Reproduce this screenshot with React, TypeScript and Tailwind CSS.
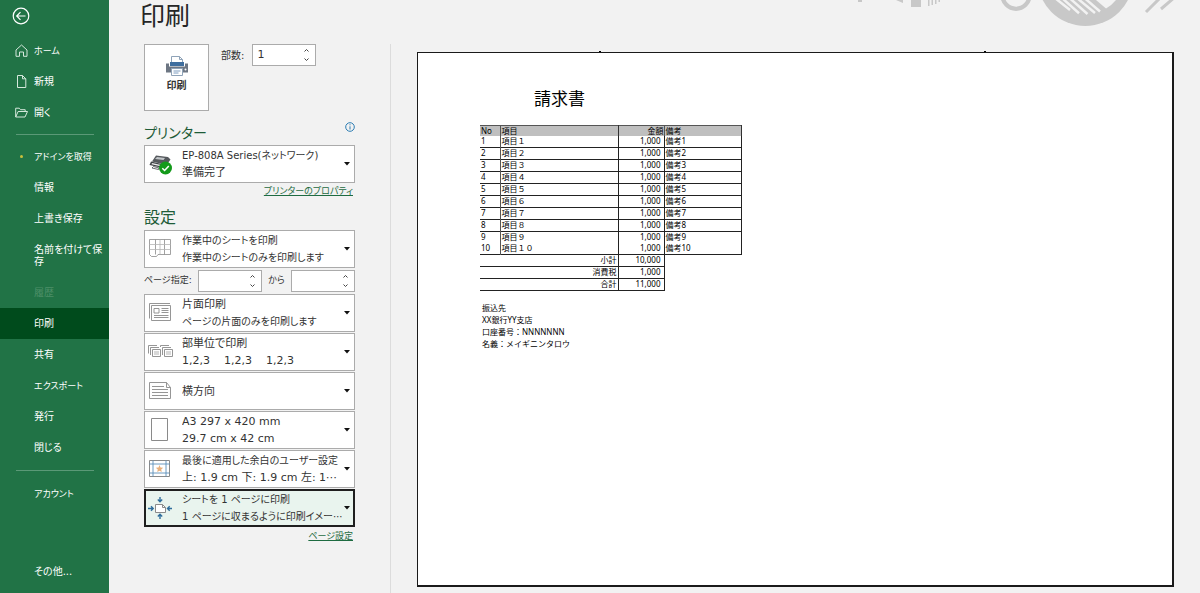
import React from "react";

const ink = "#8a8a8a";

const hasKatakana = (text: string) => /[ァ-ヶ]/.test(text);

function BackIcon() {
  return (
    <svg width="18" height="18" viewBox="0 0 18 18" fill="none" stroke="#fff" strokeWidth="1.2">
      <circle cx="9" cy="9" r="7.8" />
      <path d="M13.5 9H5M8.5 5.2L4.7 9l3.8 3.8" />
    </svg>
  );
}

function HomeIcon() {
  return (
    <svg width="13" height="13" viewBox="0 0 13 13" fill="none" stroke="#d5e8dc" strokeWidth="1">
      <path d="M1 6L6.5 1 12 6v6.3H8.5V8h-4v4.3H1z" />
    </svg>
  );
}

function NewIcon() {
  return (
    <svg width="13" height="13" viewBox="0 0 13 13" fill="none" stroke="#d5e8dc" strokeWidth="1">
      <path d="M2.5.5h5l3.3 3.3v8.7H2.5zM7.5.5v3.3h3.3" />
    </svg>
  );
}

function OpenIcon() {
  return (
    <svg width="13" height="13" viewBox="0 0 13 13" fill="none" stroke="#d5e8dc" strokeWidth="1">
      <path d="M.7 11V2.2h3.6l1.2 1.5h4.7v1.8M.7 11l2.4-5.5h9.4L10 11z" />
    </svg>
  );
}

function PrinterIcon() {
  return (
    <svg width="24" height="22" viewBox="0 0 24 22">
      <path d="M6.500 9V1.500h8l3 3V9" fill="#fff" stroke="#8fa3b8" />
      <path d="M14.500 1.500v3h3" fill="none" stroke="#8fa3b8" />
      <path d="M1 8.500h3v3h16v-3h3v9H1z" fill="#6d7683" />
      <path d="M5 7h14v4H5z" fill="#3f6e9e" />
      <path d="M6.500 13.500h11v7h-11z" fill="#fff" stroke="#8fa3b8" />
      <path d="M8.500 16h7M8.500 18h5" stroke="#7d9cc0" />
      <circle cx="20.500" cy="14.500" r="1" fill="#fff" />
    </svg>
  );
}

function ReadyPrinterIcon() {
  return (
    <svg width="26" height="24" viewBox="0 0 26 24">
      <path d="M8 3.500l12 1.500 2.500 2.500-4 5.500L4 9.500z" fill="#55595d" />
      <path d="M9 5l8 1-1.500 2-8.500-1z" fill="#c3c7ca" />
      <path d="M3 9.500l13 3-1 3.500-13.500-3z" fill="#3f4347" />
      <path d="M4 11l9 2-.5 1.200-9-2z" fill="#eee" />
      <path d="M5.500 14.500L11 16l-.5 1.500-6.500-1.500z" fill="#fff" stroke="#44484c" strokeWidth=".8" />
      <circle cx="17.500" cy="16" r="6.500" fill="#149a1b" />
      <path d="M14.300 16.200l2.300 2.300 4.200-4.600" fill="none" stroke="#fff" strokeWidth="1.500" />
    </svg>
  );
}

function SheetIcon() {
  return (
    <svg width="26" height="22" viewBox="0 0 26 22" fill="none" stroke={ink} strokeWidth=".8">
      <path d="M1.500 1.500h21v15H10l-1.500 2h-5l-2-2zM7.500 1.500v15M16.500 1.500v15" />
      <path d="M1.500 6.500h21M1.500 11.500h21" stroke="#b5b5b5" />
      <path d="M12 1.500v15" stroke="#b5b5b5" />
    </svg>
  );
}

function OneSideIcon() {
  return (
    <svg width="26" height="22" viewBox="0 0 26 22" fill="none" stroke={ink} strokeWidth=".9">
      <path d="M3.500 3.500h19v15h-19zM22 1.500H1.500v15M6 6.500h5v4.500H6zM13.500 6.500h7M13.500 8.500h7M13.500 10.500h7M6 13.500h14.500M6 15.500h14.500" />
    </svg>
  );
}

function CollateIcon() {
  return (
    <svg width="26" height="16" viewBox="0 0 26 16" fill="none" stroke={ink} strokeWidth=".9">
      <path d="M4.500 5.500h8v7h-8zM2.500 11V3.500H11M.5 9.500v-8h8.500" />
      <path d="M16.500 5.500h8v7h-8zM14.500 11V3.500H23M12.500 3v-1.500H21" />
      <path d="M6 8h5M6 10h5M18 8h5M18 10h5" stroke="#aaa" />
    </svg>
  );
}

function LandscapeIcon() {
  return (
    <svg width="26" height="22" viewBox="0 0 26 22" fill="none" stroke={ink} strokeWidth=".9">
      <path d="M1.500 2.500h17l4 5v11h-21zM18.500 2.500v5h4M4 6.500h12M4 9.500h16M4 12.500h16M4 15.500h16" />
    </svg>
  );
}

function PaperIcon() {
  return (
    <svg width="26" height="26" viewBox="0 0 26 26" fill="none" stroke={ink}>
      <path d="M3.500 1.500h16v22h-16z" />
    </svg>
  );
}

function MarginIcon() {
  return (
    <svg width="26" height="22" viewBox="0 0 26 22" fill="none">
      <path d="M1.500 2.500h20v16h-20z" stroke={ink} />
      <path d="M1.500 6h20M1.500 15h20M5 2.500v16M18 2.500v16" stroke="#5b8fb9" strokeWidth=".9" />
      <path d="M11.500 7l1 2.500 2.700.2-2 1.800.6 2.600-2.300-1.400-2.300 1.400.6-2.600-2-1.800 2.700-.2z" fill="#e8b07c" />
    </svg>
  );
}

function FitIcon() {
  return (
    <svg width="26" height="24" viewBox="0 0 26 24" fill="none">
      <path d="M7.500 8.500h7l3 3v5h-10z" fill="#fff" stroke={ink} />
      <path d="M14.500 8.500v3h3" stroke={ink} />
      <path
        d="M12 1v4.500M9.800 3.600l2.200 2.200 2.200-2.200M12 23v-4.500M9.800 20.500l2.200-2.200 2.200 2.200M0 12.500h5M3 10.300l2.200 2.200L3 14.700M24 12.500h-4.500M21.700 10.300l-2.200 2.200 2.200 2.200"
        stroke="#2f6d9c"
        strokeWidth="1.400"
      />
    </svg>
  );
}

function Chevrons() {
  return (
    <span className="flex w-3 flex-col justify-between py-[3px]">
      <button type="button" aria-label="増やす">
        <svg width="7" height="5" viewBox="0 0 7 5" fill="none" stroke="#444">
          <path d="M1.500 3.500l2-2 2 2" />
        </svg>
      </button>
      <button type="button" aria-label="減らす">
        <svg width="7" height="5" viewBox="0 0 7 5" fill="none" stroke="#444">
          <path d="M1.500 1.500l2 2 2-2" />
        </svg>
      </button>
    </span>
  );
}

type SpinnerProps = { id: string; value?: string };

function Spinner({ id, value = "" }: SpinnerProps) {
  return (
    <span className="flex h-[22px] w-16 border border-[#ababab] bg-white">
      <input
        id={id}
        type="text"
        inputMode="numeric"
        defaultValue={value}
        className="min-w-0 flex-1 pl-1 text-[11px] outline-none"
      />
      <Chevrons />
    </span>
  );
}

type PickerProps = {
  label: string;
  icon: React.ReactNode;
  title: string;
  detail?: string;
  active?: boolean;
};

function Picker({ label, icon, title, detail, active }: PickerProps) {
  return (
    <label
      className={
        active
          ? "flex h-[38px] items-center border-2 border-[#1f1f1f] bg-[#e9f4ee] px-[2px]"
          : "flex h-[38px] items-center border border-[#ababab] bg-white px-[3px]"
      }>
      <span className="w-[34px] shrink-0">{icon}</span>
      <span className="flex min-w-0 flex-1 flex-col">
        <select
          aria-label={label}
          className={`h-[17px] w-full appearance-none bg-transparent leading-[17px] outline-none ${
            hasKatakana(title) ? "text-[10px]" : "text-[11px]"
          }`}>
          <option>{title}</option>
        </select>
        {detail && (
          <span
            className={`whitespace-pre leading-[18px] ${
              hasKatakana(detail) ? "text-[10px]" : "text-[11px]"
            }`}>
            {detail}
          </span>
        )}
      </span>
      <svg className="shrink-0" width="8" height="6" viewBox="0 0 8 6">
        <path d="M1 1h6L4 4.500z" fill="#111" />
      </svg>
    </label>
  );
}

type NavItemProps = {
  text: string;
  icon?: React.ReactNode;
  active?: boolean;
  disabled?: boolean;
};

function NavItem({ text, icon, active, disabled }: NavItemProps) {
  const tone = active ? "bg-[#004b1c] text-white" : disabled ? "text-[#4d8f68]" : "text-white";
  const size = hasKatakana(text) ? "text-[9px]" : "text-[10px]";
  return (
    <button
      type="button"
      disabled={disabled}
      className={`flex min-h-[31px] w-full items-center whitespace-pre text-left leading-3 ${size} ${tone}`}>
      <span className="flex w-[34px] shrink-0 justify-center pl-2">{icon}</span>
      {text}
    </button>
  );
}

function Sidebar() {
  return (
    <nav className="flex w-[109px] shrink-0 flex-col bg-[#217346] pb-[6px]">
      <button type="button" aria-label="戻る" className="flex h-[35px] items-start pl-3 pt-[7px]">
        <BackIcon />
      </button>
      <NavItem text="ホーム" icon={<HomeIcon />} />
      <NavItem text="新規" icon={<NewIcon />} />
      <NavItem text="開く" icon={<OpenIcon />} />
      <hr className="my-[6px] ml-4 mr-[15px] border-[#5b9977]" />
      <NavItem
        text="アドインを取得"
        icon={<span className="h-[3px] w-[3px] rounded-full bg-[#c9c03c]" />}
      />
      <NavItem text="情報" />
      <NavItem text="上書き保存" />
      <div className="py-[6px]">
        <NavItem text={"名前を付けて保\n存"} />
      </div>
      <NavItem text="履歴" disabled />
      <NavItem text="印刷" active />
      <NavItem text="共有" />
      <NavItem text="エクスポート" />
      <NavItem text="発行" />
      <NavItem text="閉じる" />
      <hr className="my-[7px] ml-4 mr-[15px] border-[#5b9977]" />
      <NavItem text="アカウント" />
      <div className="mt-auto">
        <NavItem text="その他..." />
      </div>
    </nav>
  );
}

function Settings() {
  return (
    <section className="w-[211px] shrink-0 text-[#333]">
      <div className="flex gap-3">
        <button
          type="button"
          className="flex h-[67px] w-[65px] flex-col items-center border border-[#ababab] bg-white pt-[10px] text-[10px] font-bold leading-[18px]">
          <PrinterIcon />
          印刷
        </button>
        <div className="flex h-[22px] items-center gap-2">
          <label htmlFor="copies" className="text-[10px]">
            部数:
          </label>
          <Spinner id="copies" value="1" />
        </div>
      </div>

      <div className="mt-2 flex h-[26px] justify-between">
        <h2 className="text-sm leading-[28px] text-[#1e5c38]">プリンター</h2>
        <button type="button" aria-label="プリンター情報" className="h-4">
          <svg width="10" height="10" viewBox="0 0 10 10" fill="none" stroke="#2b7cb3">
            <circle cx="5" cy="5" r="4.300" />
            <path d="M5 4.300V7.500M5 2.300v1" />
          </svg>
        </button>
      </div>
      <Picker
        label="プリンター"
        icon={<ReadyPrinterIcon />}
        title="EP-808A Series(ネットワーク)"
        detail="準備完了"
      />
      <div className="flex h-[18px] items-center justify-end pr-[2px]">
        <a href="#printer" className="text-[9px] text-[#1e6b41] underline">
          プリンターのプロパティ
        </a>
      </div>

      <h2 className="h-[29px] text-base leading-[34px] text-[#1e5c38]">設定</h2>
      <Picker
        label="印刷対象"
        icon={<SheetIcon />}
        title="作業中のシートを印刷"
        detail="作業中のシートのみを印刷します"
      />
      <div className="my-[2px] flex h-[22px] items-center justify-between">
        <label htmlFor="from" className="text-[9px]">
          ページ指定:
        </label>
        <Spinner id="from" />
        <label htmlFor="to" className="text-[9px]">
          から
        </label>
        <Spinner id="to" />
      </div>
      <div className="flex flex-col gap-px">
        <Picker
          label="両面印刷"
          icon={<OneSideIcon />}
          title="片面印刷"
          detail="ページの片面のみを印刷します"
        />
        <Picker
          label="印刷単位"
          icon={<CollateIcon />}
          title="部単位で印刷"
          detail="1,2,3    1,2,3    1,2,3"
        />
        <Picker label="印刷の向き" icon={<LandscapeIcon />} title="横方向" />
        <Picker
          label="用紙サイズ"
          icon={<PaperIcon />}
          title="A3 297 x 420 mm"
          detail="29.7 cm x 42 cm"
        />
        <Picker
          label="余白"
          icon={<MarginIcon />}
          title="最後に適用した余白のユーザー設定"
          detail="上: 1.9 cm 下: 1.9 cm 左: 1⋯"
        />
        <Picker
          label="拡大縮小"
          icon={<FitIcon />}
          title="シートを 1 ページに印刷"
          detail="1 ページに収まるように印刷イメー⋯"
          active
        />
      </div>
      <div className="flex h-5 items-center justify-end pr-[2px]">
        <a href="#page" className="text-[9px] text-[#1e6b41] underline">
          ページ設定
        </a>
      </div>
    </section>
  );
}

const rows = ["１", "２", "３", "４", "５", "６", "７", "８", "９", "１０"];
const totals = [
  ["小計", "10,000"],
  ["消費税", "1,000"],
  ["合計", "11,000"],
];

function Invoice() {
  return (
    <article className="relative min-h-[535px] flex-1 border-b-2 border-l border-r-2 border-t border-[#1a1a1a] bg-white pl-[62px] pt-8 font-['Noto_Sans','Noto_Sans_CJK_JP',sans-serif] text-[8px] text-black [font-feature-settings:normal]">
      <span className="absolute -top-[2px] left-[24%] h-px w-[2px] bg-black" />
      <span className="absolute -top-[2px] left-[75%] h-px w-[2px] bg-black" />
      <h2 className="pl-[54px] text-[17px] leading-7">請求書</h2>
      <table className="mt-3 h-[166px] w-[261px] table-fixed border-collapse leading-[10px]">
        <colgroup>
          <col className="w-5" />
          <col className="w-[118px]" />
          <col className="w-[46px]" />
          <col className="w-[77px]" />
        </colgroup>
        <thead>
          <tr className="border-t border-[#555] bg-[#bfbfbf] text-left">
            <th className="border-r border-[#555] pl-px font-normal">No</th>
            <th className="border-r border-[#333] pl-px font-normal">項目</th>
            <th className="border-r border-[#555] text-right font-normal">金額</th>
            <th className="border-r border-[#333] pl-px font-normal">備考</th>
          </tr>
        </thead>
        <tbody>
          {rows.map((n, i) => (
            <tr key={n} className={i === 8 ? "" : "border-b border-[#222]"}>
              <td className="border-r border-[#555] pl-px">{i + 1}</td>
              <td className="border-r border-[#222] pl-px">項目{n}</td>
              <td className="border-r border-[#222] pr-[3px] text-right">1,000</td>
              <td className="border-r border-[#222] pl-px">備考{i + 1}</td>
            </tr>
          ))}
          {totals.map(([name, sum]) => (
            <tr key={name}>
              <td colSpan={2} className="border-b border-r border-[#222] pr-px text-right">
                {name}
              </td>
              <td className="border-b border-r border-[#222] pr-[3px] text-right">{sum}</td>
              <td />
            </tr>
          ))}
        </tbody>
      </table>
      <div className="mt-[11px] pl-[2px] leading-3">
        <p>振込先</p>
        <p>XX銀行YY支店</p>
        <p>口座番号：NNNNNNN</p>
        <p>名義：メイギニンタロウ</p>
      </div>
    </article>
  );
}

function Ornament() {
  return (
    <svg className="absolute right-0 top-0" width="360" height="30" viewBox="0 0 360 30">
      <g fill="#c8c8c8">
        <path d="M18 0h4v2h-4zM56 0h7v3zM71 0h10v7H71z" />
        <path d="M88 0h1.500v6H88zM91.500 0H93v5h-1.500zM95 0h1.500v4H95zM98.500 0h1.500v2h-1.500z" />
        <circle cx="245.300" cy="-22" r="48" />
      </g>
      <path d="M256 0l10 8.500q6-3.500 10-8.500z" fill="#f2f2f2" />
      <path
        d="M215 -2l15 12M222 -2l17 15.300M229.500 -2l18 16M237 -2l18 15M244.500 -2l15.500 13.500"
        stroke="#f2f2f2"
        strokeWidth="2.500"
      />
      <g fill="none" stroke="#c8c8c8">
        <circle cx="176" cy="-4.700" r="13.500" strokeWidth="4.300" />
        <path d="M306 12l14-14M321 9l14-12" strokeWidth="3" />
      </g>
    </svg>
  );
}

export default function App() {
  return (
    <div className="flex min-h-screen bg-[#f2f2f2] font-['DejaVu_Sans','Noto_Sans_CJK_JP',sans-serif] [font-feature-settings:'palt']">
      <Sidebar />
      <main className="relative flex min-w-0 flex-1 flex-col pl-[35px]">
        <Ornament />
        <h1 className="-ml-1 h-11 text-[25px] leading-[34px] text-[#262626]">印刷</h1>
        <div className="flex flex-1">
          <Settings />
          <div className="ml-[35px] w-px shrink-0 bg-[#dcdcdc]" />
          <div className="flex flex-1 pb-[6px] pl-[26px] pr-[26px] pt-2">
            <Invoice />
          </div>
        </div>
      </main>
    </div>
  );
}
